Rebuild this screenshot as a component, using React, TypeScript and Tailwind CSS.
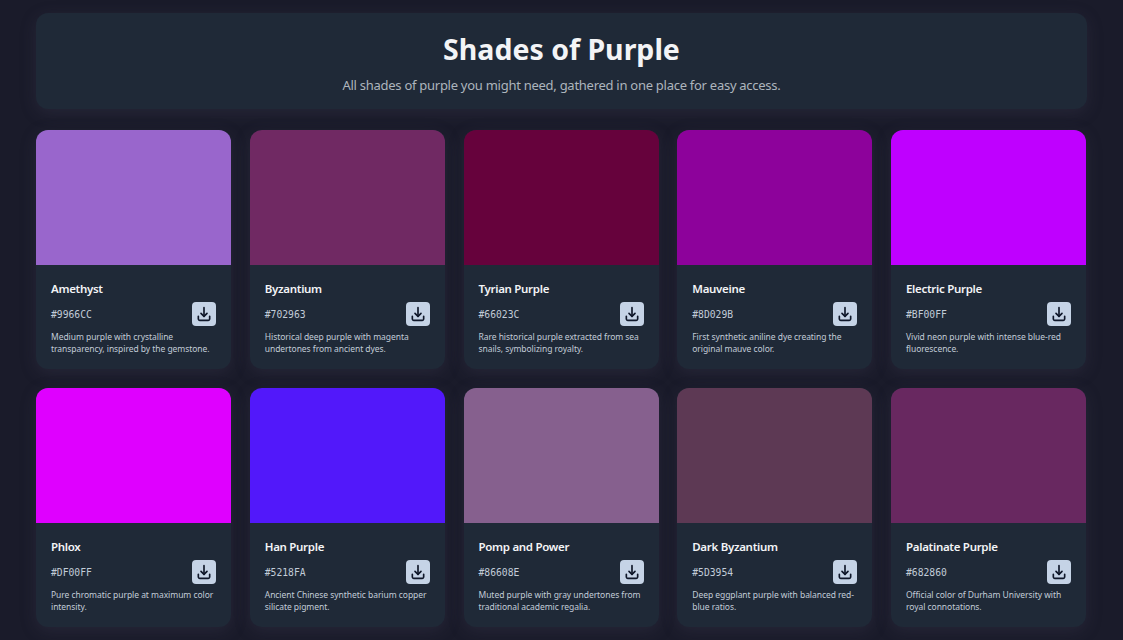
import React from "react";

const colors = [
  { name: "Amethyst", hex: "#9966CC", desc: "Medium purple with crystalline transparency, inspired by the gemstone." },
  { name: "Byzantium", hex: "#702963", desc: "Historical deep purple with magenta undertones from ancient dyes." },
  { name: "Tyrian Purple", hex: "#66023C", desc: "Rare historical purple extracted from sea snails, symbolizing royalty." },
  { name: "Mauveine", hex: "#8D029B", desc: "First synthetic aniline dye creating the original mauve color." },
  { name: "Electric Purple", hex: "#BF00FF", desc: "Vivid neon purple with intense blue-red fluorescence." },
  { name: "Phlox", hex: "#DF00FF", desc: "Pure chromatic purple at maximum color intensity." },
  { name: "Han Purple", hex: "#5218FA", desc: "Ancient Chinese synthetic barium copper silicate pigment." },
  { name: "Pomp and Power", hex: "#86608E", desc: "Muted purple with gray undertones from traditional academic regalia." },
  { name: "Dark Byzantium", hex: "#5D3954", desc: "Deep eggplant purple with balanced red-blue ratios." },
  { name: "Palatinate Purple", hex: "#682860", desc: "Official color of Durham University with royal connotations." },
];

function Download() {
  return (
    <svg width="16" height="16" viewBox="0 0 24 24" fill="none" stroke="#0f172a" strokeWidth="2.5" strokeLinecap="round" strokeLinejoin="round">
      <path d="M3.5 15.5v4a2 2 0 0 0 2 2h13a2 2 0 0 0 2-2v-4" />
      <path d="M12 2.5v13" />
      <path d="M7.5 11l4.5 4.5 4.5-4.5" />
    </svg>
  );
}

export default function App() {
  return (
    <div className="min-h-screen bg-[#1a1b2a] px-9 pt-[13px] pb-3 font-['Noto_Sans',sans-serif]">
      <header className="h-[96px] rounded-xl bg-[#1f2937] text-center pt-[15px] shadow-[0_4px_16px_rgba(75,70,95,0.25)]">
        <h1 className="text-[28.5px] leading-[42px] font-bold text-[#f3f4f6]">Shades of Purple</h1>
        <p className="mt-[3px] text-[13px] leading-[24px] tracking-[-0.27px] text-[#adb5bd]">All shades of purple you might need, gathered in one place for easy access.</p>
      </header>
      <main className="mt-[21px] mr-px grid grid-cols-5 gap-[18.75px]">
        {colors.map((c) => (
          <div key={c.name} className="h-[239.25px] overflow-hidden rounded-xl bg-[#1f2937] shadow-[0_4px_16px_rgba(75,70,95,0.25)]">
            <div className="h-[135px]" style={{ backgroundColor: c.hex }} />
            <div className="px-[15px] pt-[15px]">
              <h3 className="text-[11.5px] leading-[18px] tracking-[-0.3px] font-semibold text-[#f3f4f6]">{c.name}</h3>
              <div className="mt-[4px] flex h-6 items-center justify-between">
                <span className="pt-[2px] font-['DejaVu_Sans_Mono',monospace] text-[9.7px] text-[#c2ccd8]">{c.hex}</span>
                <button className="flex h-6 w-6 items-center justify-center rounded bg-[#c5d3e6]">
                  <Download />
                </button>
              </div>
              <p className="mt-[5px] text-[8.5px] leading-[12px] tracking-[-0.05px] text-[#c2ccd8]">{c.desc}</p>
            </div>
          </div>
        ))}
      </main>
    </div>
  );
}
